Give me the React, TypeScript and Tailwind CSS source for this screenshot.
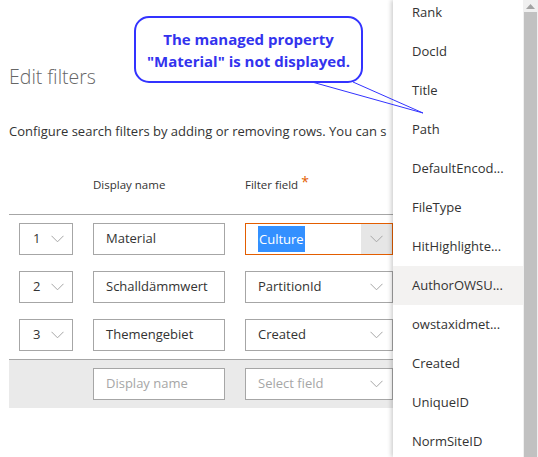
import React from 'react';

const font = { fontFamily: '"Open Sans", "Noto Sans", sans-serif' };

function Chevron({ className = '' }: { className?: string }) {
  return (
    <svg width="13" height="8" viewBox="0 0 13 8" className={className}>
      <path d="M0.5 0.8 L6.5 6.8 L12.5 0.8" fill="none" stroke="#a6a6a6" strokeWidth="1" />
    </svg>
  );
}

const rows = [
  { n: 1, name: 'Material', field: 'Culture', active: true },
  { n: 2, name: 'Schalldämmwert', field: 'PartitionId' },
  { n: 3, name: 'Themengebiet', field: 'Created' },
];

const menu = [
  'Rank',
  'DocId',
  'Title',
  'Path',
  'DefaultEncod...',
  'FileType',
  'HitHighlighte...',
  'AuthorOWSU...',
  'owstaxidmet...',
  'Created',
  'UniqueID',
  'NormSiteID',
];

export default function App() {
  return (
    <div className="relative w-[538px] h-[457px] overflow-hidden bg-white text-[#333]" style={font}>
      {/* Page */}
      <div className="pl-[9px] pt-[63px] w-[393px]">
        <h1 className="text-[19.5px] leading-[28px] font-light text-[#666] whitespace-nowrap">Edit filters</h1>
        <p className="mt-[31px] text-[13px] leading-[18px] whitespace-nowrap">
          Configure search filters by adding or removing rows. You can s
        </p>

        {/* Header */}
        <div className="mt-[35px] flex h-[40px] border-b border-[#a6a6a6] text-[11.5px] leading-[16px]">
          <div className="w-[84px]" />
          <div className="w-[152px] pt-[2px]">Display name</div>
          <div className="pt-[2px]">
            Filter field <span className="text-[#e35d00] text-[14px] align-top leading-[10px]">*</span>
          </div>
        </div>

        {/* Rows */}
        <div className="flex flex-col gap-[16px] pt-[8px]">
          {rows.map((r) => (
            <div key={r.n} className="flex items-center h-[32px] text-[13px]">
              <div className="ml-[10px] w-[54px] h-[32px] border border-[#a6a6a6] flex items-center pl-[13px] gap-[11px]">
                <span>{r.n}</span>
                <Chevron />
              </div>
              <div className="ml-[20px] w-[132px] h-[32px] border border-[#a6a6a6] flex items-center pl-[12px] whitespace-nowrap overflow-hidden">
                {r.name}
              </div>
              <div
                className={
                  r.active
                    ? 'ml-[20px] w-[148px] h-[32px] border border-[#e35d00] flex items-stretch'
                    : 'ml-[20px] w-[148px] h-[32px] border border-[#a6a6a6] flex items-stretch'
                }
              >
                <div className="flex-1 flex items-center pl-[12px]">
                  {r.active ? (
                    <span className="bg-[#3390ff] text-white h-[26px] leading-[26px] px-[1px]">{r.field}</span>
                  ) : (
                    <span>{r.field}</span>
                  )}
                </div>
                <div className={r.active ? 'w-[31px] bg-[#e6e6e6] flex items-center justify-center' : 'w-[31px] flex items-center justify-center'}>
                  <Chevron />
                </div>
              </div>
            </div>
          ))}
        </div>

        {/* New row */}
        <div className="mt-[8px] h-[49px] border-t border-[#a6a6a6] bg-[#eaeaea] flex items-center text-[13px] text-[#a6a6a6]">
          <div className="ml-[84px] w-[132px] h-[32px] border border-[#a6a6a6] bg-white flex items-center pl-[12px]">
            Display name
          </div>
          <div className="ml-[20px] w-[148px] h-[32px] border border-[#a6a6a6] bg-white flex items-stretch">
            <div className="flex-1 flex items-center pl-[12px]">Select field</div>
            <div className="w-[31px] flex items-center justify-center">
              <Chevron />
            </div>
          </div>
        </div>
      </div>

      {/* Dropdown menu */}
      <div className="absolute top-0 left-[393px] w-[145px] h-[457px] flex">
        <div className="w-[130px] h-full bg-white shadow-[-2px_0_4px_rgba(0,0,0,0.18)] flex flex-col">
          <div className="-mt-[7px] flex flex-col">
            {menu.map((m) => (
              <div
                key={m}
                className={
                  m === 'AuthorOWSU...'
                    ? 'shrink-0 h-[39px] flex items-center pl-[19px] text-[13px] whitespace-nowrap bg-[#f3f2f1]'
                    : 'shrink-0 h-[39px] flex items-center pl-[19px] text-[13px] whitespace-nowrap'
                }
              >
                {m}
              </div>
            ))}
          </div>
        </div>
        <div className="w-[15px] h-full bg-[#f0f0f0] flex flex-col items-center">
          <div className="h-[12px] flex items-center justify-center">
            <svg width="9" height="5" viewBox="0 0 9 5">
              <path d="M0 5 L4.5 0 L9 5 Z" fill="#a3a3a3" />
            </svg>
          </div>
          <div className="w-[13px] flex-1 bg-[#c1c1c1]" />
        </div>
      </div>

      {/* Callout */}
      <svg className="absolute left-0 top-0 pointer-events-none" width="538" height="457">
        <path d="M312 82 L423 113 L353 82" fill="none" stroke="#3333ff" strokeWidth="1" />
      </svg>
      <div className="absolute left-[134px] top-[16px] w-[229px] h-[67px] rounded-[15px] border-2 border-[#3333ff] bg-white flex flex-col items-center justify-center pt-[1px] text-[#3333ee] font-bold text-[15px] leading-[22px]">
        <div>The managed property</div>
        <div>"Material" is not displayed.</div>
      </div>
    </div>
  );
}
